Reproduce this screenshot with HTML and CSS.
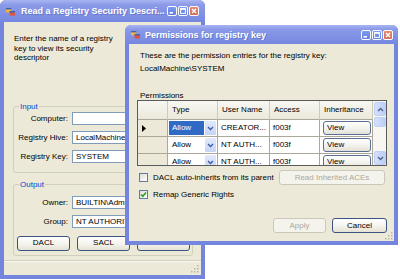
FILE: index.html
```html
<!DOCTYPE html>
<html>
<head>
<meta charset="utf-8">
<link rel="stylesheet" href="styles.css">
</head>
<body>
<div class="win win-main">
  <div class="titlebar">
    <svg class="appicon" viewBox="0 0 10 10"><rect x="0" y="1" width="6" height="5" fill="#f2b53a"/><rect x="0" y="1" width="6" height="1.6" fill="#3562c4"/><rect x="4" y="4.5" width="6" height="5" fill="#e0553a"/><rect x="4" y="4.5" width="6" height="1.6" fill="#3562c4"/></svg>
    <span class="title">Read a Registry Security Descri...</span>
    <div class="tbtns">
      <span class="tb"><svg viewBox="0 0 8 8"><rect x="1.5" y="5" width="3.5" height="1.6" fill="#fff"/></svg></span>
      <span class="tb"><svg viewBox="0 0 8 8"><rect x="1.6" y="1.6" width="4.8" height="4.8" fill="none" stroke="#fff" stroke-width="1"/><rect x="1.6" y="1.4" width="4.8" height="1.4" fill="#fff"/></svg></span>
      <span class="tb tb-close"><svg viewBox="0 0 8 8"><path d="M2 2 L6 6 M6 2 L2 6" stroke="#fff" stroke-width="1.4"/></svg></span>
    </div>
  </div>
  <div class="body mainbody">
    <div class="intro">Enter the name of a registry<br>key to view its security<br>descriptor</div>
    <fieldset class="group ingroup">
      <legend>Input</legend>
      <div class="form">
        <span class="lbl">Computer:</span><span class="tbox"></span>
        <span class="lbl">Registry Hive:</span><span class="tbox">LocalMachine</span>
        <span class="lbl">Registry Key:</span><span class="tbox">SYSTEM</span>
      </div>
    </fieldset>
    <fieldset class="group outgroup">
      <legend>Output</legend>
      <div class="form">
        <span class="lbl">Owner:</span><span class="tbox">BUILTIN\Administrators</span>
        <span class="lbl">Group:</span><span class="tbox">NT AUTHORITY\SYSTEM</span>
      </div>
      <div class="btnrow">
        <button class="btn">DACL</button>
        <button class="btn">SACL</button>
        <button class="btn">SDDL</button>
      </div>
    </fieldset>
    <div class="status">
      <svg class="grip" viewBox="0 0 8 8"><g fill="#b8b5a6"><rect x="6" y="0" width="1.5" height="1.5"/><rect x="3" y="3" width="1.5" height="1.5"/><rect x="6" y="3" width="1.5" height="1.5"/><rect x="0" y="6" width="1.5" height="1.5"/><rect x="3" y="6" width="1.5" height="1.5"/><rect x="6" y="6" width="1.5" height="1.5"/></g></svg>
    </div>
  </div>
</div>

<div class="win win-perm">
  <div class="titlebar">
    <svg class="appicon" viewBox="0 0 10 10"><rect x="0" y="1" width="6" height="5" fill="#f2b53a"/><rect x="0" y="1" width="6" height="1.6" fill="#3562c4"/><rect x="4" y="4.5" width="6" height="5" fill="#e0553a"/><rect x="4" y="4.5" width="6" height="1.6" fill="#3562c4"/></svg>
    <span class="title">Permissions for registry key</span>
    <div class="tbtns">
      <span class="tb"><svg viewBox="0 0 8 8"><rect x="1.5" y="5" width="3.5" height="1.6" fill="#fff"/></svg></span>
      <span class="tb"><svg viewBox="0 0 8 8"><rect x="1.6" y="1.6" width="4.8" height="4.8" fill="none" stroke="#fff" stroke-width="1"/><rect x="1.6" y="1.4" width="4.8" height="1.4" fill="#fff"/></svg></span>
      <span class="tb tb-close"><svg viewBox="0 0 8 8"><path d="M2 2 L6 6 M6 2 L2 6" stroke="#fff" stroke-width="1.4"/></svg></span>
    </div>
  </div>
  <div class="body permbody">
    <div class="msg">These are the permission entries for the registry key:<br>LocalMachine\SYSTEM</div>
    <div class="plabel">Permissions</div>
    <div class="dgv">
      <div class="dgv-table">
        <div class="hc"></div><div class="hc">Type</div><div class="hc">User Name</div><div class="hc">Access</div><div class="hc">Inheritance</div>

        <div class="rh"><svg class="tri" viewBox="0 0 4 7"><path d="M0 0 L4 3.5 L0 7 Z" fill="#000"/></svg></div>
        <div class="c combo sel"><span class="cv">Allow</span><span class="dd"><svg viewBox="0 0 7 5"><path d="M1 1 L3.5 3.5 L6 1" fill="none" stroke="#3d5aa8" stroke-width="1.3"/></svg></span></div>
        <div class="c">CREATOR...</div>
        <div class="c">f003f</div>
        <div class="c vcell"><span class="vbtn">View</span></div>

        <div class="rh"></div>
        <div class="c combo"><span class="cv">Allow</span><span class="dd"><svg viewBox="0 0 7 5"><path d="M1 1 L3.5 3.5 L6 1" fill="none" stroke="#3d5aa8" stroke-width="1.3"/></svg></span></div>
        <div class="c">NT AUTH...</div>
        <div class="c">f003f</div>
        <div class="c vcell"><span class="vbtn">View</span></div>

        <div class="rh"></div>
        <div class="c combo"><span class="cv">Allow</span><span class="dd"><svg viewBox="0 0 7 5"><path d="M1 1 L3.5 3.5 L6 1" fill="none" stroke="#3d5aa8" stroke-width="1.3"/></svg></span></div>
        <div class="c">NT AUTH...</div>
        <div class="c">f003f</div>
        <div class="c vcell"><span class="vbtn">View</span></div>
      </div>
      <div class="vs">
        <span class="sbtn"><svg viewBox="0 0 7 5"><path d="M1 4 L3.5 1.5 L6 4" fill="none" stroke="#4d6185" stroke-width="1.3"/></svg></span>
        <span class="thumb"></span>
        <span class="track"></span>
        <span class="sbtn"><svg viewBox="0 0 7 5"><path d="M1 1 L3.5 3.5 L6 1" fill="none" stroke="#4d6185" stroke-width="1.3"/></svg></span>
      </div>
    </div>
    <div class="optrow">
      <span class="chk"><span class="box"></span>DACL auto-inherits from its parent</span>
      <button class="btn dis wide">Read Inherited ACEs</button>
    </div>
    <span class="chk chk2"><span class="box"><svg viewBox="0 0 7 7"><path d="M1 3.5 L2.8 5.3 L6 1.5" fill="none" stroke="#21a121" stroke-width="1.5"/></svg></span>Remap Generic Rights</span>
    <div class="actions">
      <button class="btn dis act">Apply</button>
      <button class="btn act cancel">Cancel</button>
    </div>
    <svg class="grip pgrip" viewBox="0 0 8 8"><g fill="#b8b5a6"><rect x="6" y="0" width="1.5" height="1.5"/><rect x="3" y="3" width="1.5" height="1.5"/><rect x="6" y="3" width="1.5" height="1.5"/><rect x="0" y="6" width="1.5" height="1.5"/><rect x="3" y="6" width="1.5" height="1.5"/><rect x="6" y="6" width="1.5" height="1.5"/></g></svg>
  </div>
</div>
</body>
</html>
```

FILE: styles.css
```css
* { box-sizing: border-box; }
html, body { margin: 0; padding: 0; }
body {
  width: 400px;
  height: 279px;
  overflow: hidden;
  position: relative;
  background: #fff;
  font-family: "Liberation Sans", Arial, sans-serif;
  font-size: 8px;
  line-height: 10px;
  color: #000;
}

/* windows on the desktop */
.win {
  position: absolute;
  display: flex;
  flex-direction: column;
  background: #7485de;
  padding: 0 4px 4px;
  border-radius: 6px 6px 0 0;
}
.win-main { left: 0; top: 0; width: 205px; height: 279px; }
.win-perm { left: 125px; top: 25px; width: 273px; height: 220px; }

.titlebar {
  flex: none;
  display: flex;
  align-items: center;
  margin: 0 -4px;
  padding: 0 6px 0 6px;
  border-radius: 6px 6px 0 0;
  background: linear-gradient(#a9b5f2 0%, #8a9ae8 22%, #7f90e4 65%, #7687df 100%);
  color: #fff;
  font-weight: bold;
  font-size: 9px;
}
.win-main .titlebar { height: 22px; }
.win-perm .titlebar { height: 19px; padding-right: 5px; }
.appicon { width: 9px; height: 9px; flex: none; margin-right: 6px; }
.win-perm .appicon { margin-right: 5px; }
.title {
  flex: 1;
  white-space: nowrap;
  overflow: hidden;
  text-shadow: 1px 1px 0 rgba(40, 50, 140, 0.3);
}
.tbtns { display: flex; gap: 1px; flex: none; }
.tb {
  width: 10px;
  height: 10px;
  border: 1px solid #fff;
  border-radius: 2px;
  background: linear-gradient(#809bee, #5f80e4);
  display: flex;
}
.tb svg { width: 8px; height: 8px; }
.tb-close { background: linear-gradient(#e48a73, #d46a55); }

.body {
  flex: 1;
  min-height: 0;
  background: #ece9d8;
  display: flex;
  flex-direction: column;
  position: relative;
}

/* main window */
.mainbody { padding-top: 12px; }
.intro { margin-left: 10px; line-height: 9.6px; }

.group {
  margin: 0 0 0 9px;
  width: 180px;
  min-width: 0;
  border: 1px solid #d0d0bf;
  border-radius: 3px;
  padding: 0 3px 9px 0;
}
.group legend {
  color: #0046d5;
  padding: 0 1px;
  margin-left: 5px;
  line-height: 10px;
}
.ingroup { margin-top: 39px; }
.outgroup { margin-top: 7px; padding-top: 6px; padding-bottom: 4px; }

.form {
  display: grid;
  grid-template-columns: 54px 1fr;
  column-gap: 4px;
  row-gap: 6px;
}
.lbl { text-align: right; line-height: 13px; white-space: nowrap; }
.tbox {
  height: 13px;
  background: #fff;
  border: 1px solid #7f9db9;
  padding-left: 3px;
  line-height: 11px;
  white-space: nowrap;
  overflow: hidden;
}

.btnrow { display: flex; gap: 7px; margin-top: 8px; padding-left: 3px; }

.btn {
  font: inherit;
  color: #000;
  height: 15px;
  width: 53px;
  padding: 0;
  border: 1px solid #3b5580;
  border-radius: 3px;
  background: linear-gradient(#ffffff, #f4f3ec 55%, #e4e1d4);
  display: flex;
  align-items: center;
  justify-content: center;
  flex: none;
}
.btn.dis {
  border-color: #cac8bb;
  background: #f5f4ec;
  color: #aca899;
}
.btn.wide { width: 106px; }

.status {
  margin-top: auto;
  height: 15px;
  border-top: 1px solid #d2cfc0;
  box-shadow: inset 0 1px 0 #f8f7f2;
  display: flex;
  justify-content: flex-end;
  align-items: flex-end;
  padding: 0 2px 2px 0;
}
.grip { width: 8px; height: 8px; }

/* permissions window */
.permbody { padding: 5px 0 8px; }
.msg { margin-left: 11px; line-height: 13px; white-space: nowrap; }
.plabel { margin: 17px 0 0 11px; line-height: 8px; }

.dgv {
  flex: none;
  display: flex;
  margin-left: 8px;
  width: 250px;
  height: 66px;
  border: 1px solid #5b5b5b;
  background: #fff;
  overflow: hidden;
}
.dgv-table {
  flex: none;
  width: 235px;
  display: grid;
  grid-template-columns: 30px 50px 52px 50px 53px;
  grid-template-rows: 19px 17px 17px 17px;
}
.hc {
  background: linear-gradient(#f8f7f1, #ebe9dc);
  border-right: 1px solid #cdcab8;
  border-bottom: 1px solid #aca899;
  padding-left: 4px;
  display: flex;
  align-items: center;
  white-space: nowrap;
}
.rh {
  background: #ece9d8;
  border-right: 1px solid #aca899;
  border-bottom: 1px solid #aca899;
  display: flex;
  align-items: center;
  padding-left: 4px;
}
.tri { width: 4px; height: 7px; }
.c {
  border-right: 1px solid #aca899;
  border-bottom: 1px solid #aca899;
  display: flex;
  align-items: center;
  padding-left: 3px;
  white-space: nowrap;
  overflow: hidden;
}
.combo { padding: 1px; gap: 1px; align-items: stretch; }
.cv { flex: 1; display: flex; align-items: center; padding-left: 3px; }
.sel .cv { background: #316ac5; color: #fff; }
.dd {
  width: 11px;
  flex: none;
  background: linear-gradient(#e2e9fb, #c5d4f7);
  border-radius: 1px;
  display: flex;
  align-items: center;
  justify-content: center;
}
.dd svg { width: 7px; height: 5px; }
.vcell { padding: 1px 1px 0 3px; align-items: flex-start; }
.vbtn {
  width: 48px;
  height: 14px;
  border: 1px solid #5b6f95;
  border-radius: 3px;
  background: linear-gradient(#ffffff, #f1f0ea 60%, #e3e1d6);
  padding-left: 3px;
  display: flex;
  align-items: center;
}

.vs {
  flex: 1;
  display: flex;
  flex-direction: column;
  background: #f7f6f1;
  padding: 1px 0 0 1px;
}
.sbtn, .thumb {
  background: linear-gradient(90deg, #d6e0fb, #bccff7);
  border: 1px solid #bfd0f6;
  border-radius: 2px;
  display: flex;
  align-items: center;
  justify-content: center;
}
.sbtn { height: 14px; flex: none; }
.sbtn svg { width: 7px; height: 5px; }
.thumb { height: 10px; margin-top: 1px; flex: none; }
.track { flex: 1; }

.optrow {
  margin-top: 4px;
  display: flex;
  justify-content: space-between;
  align-items: center;
  padding: 0 9px 0 10px;
}
.chk { display: flex; align-items: center; gap: 5px; line-height: 9px; white-space: nowrap; }
.chk2 { margin: 5px 0 0 10px; }
.box {
  width: 9px;
  height: 9px;
  flex: none;
  border: 1px solid #5d7ba3;
  background: linear-gradient(135deg, #dedcd3, #ffffff);
  display: flex;
}
.box svg { width: 7px; height: 7px; }

.actions {
  margin-top: auto;
  display: flex;
  justify-content: flex-end;
  gap: 6px;
  padding-right: 7px;
}
.btn.act { width: 53px; }
.btn.cancel { width: 55px; }

.pgrip { position: absolute; right: 1px; bottom: 1px; }
```
